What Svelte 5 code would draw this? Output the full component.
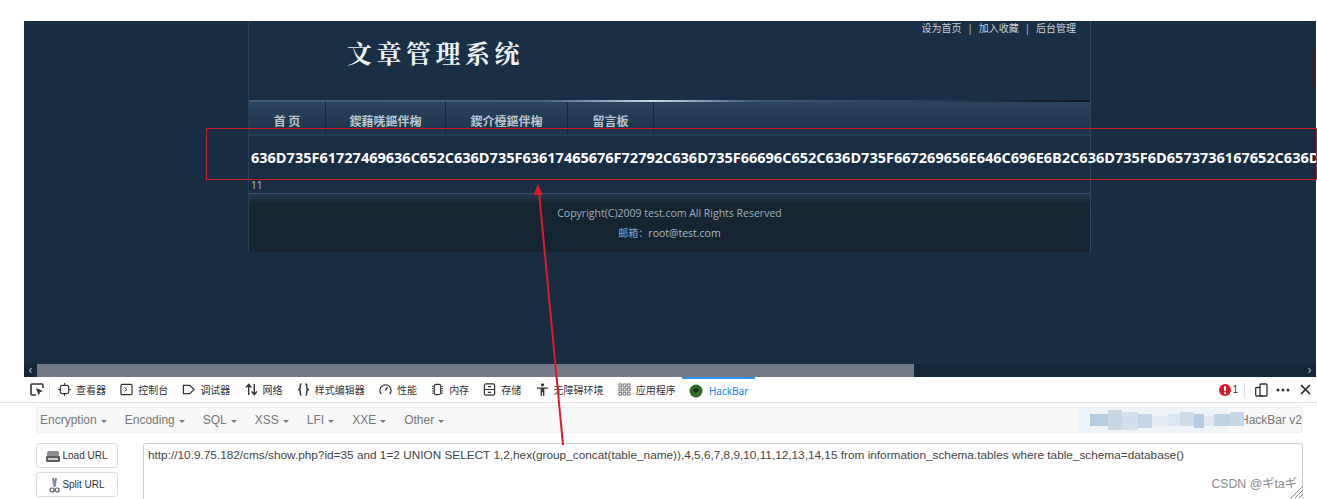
<script>
  const tools = [
    ['inspector', '查看器'], ['console', '控制台'], ['debugger', '调试器'], ['network', '网络'],
    ['style', '样式编辑器'], ['perf', '性能'], ['memory', '内存'], ['storage', '存储'],
    ['access', '无障碍环境'], ['apps', '应用程序']
  ];
  const menus = ['Encryption', 'Encoding', 'SQL', 'XSS', 'LFI', 'XXE', 'Other'];
  const nav = ['首 页', '鍥藉唴鏂伴椈', '鍥介檯鏂伴椈', '留言板'];
  const hex = '636D735F61727469636C652C636D735F63617465676F72792C636D735F66696C652C636D735F667269656E646C696E6B2C636D735F6D6573736167652C636D735F6E6F74696365';
  const url = 'http://10.9.75.182/cms/show.php?id=35 and 1=2 UNION SELECT 1,2,hex(group_concat(table_name)),4,5,6,7,8,9,10,11,12,13,14,15 from information_schema.tables where table_schema=database()';
  const mosaic = [
    [1078, 408, 150, 24, '#eef3f8'],
    [1090, 414, 18, 12, '#b9cde2'], [1108, 410, 14, 20, '#c6d7e8'], [1122, 412, 16, 18, '#d3e0ec'],
    [1138, 414, 14, 14, '#c4d5e7'], [1152, 416, 16, 10, '#e4ecf3'], [1168, 414, 12, 12, '#dbe6f0'],
    [1180, 412, 14, 14, '#cfddea'], [1194, 414, 10, 14, '#b5cbe1'], [1204, 416, 10, 10, '#dfe8f1'],
    [1214, 414, 16, 12, '#bfd2e5'], [1230, 412, 14, 14, '#c5d6e7']
  ];
</script>

<div class="screen">
  <div class="viewport">
    <div class="site">
      <header class="head">
        <div class="links"><span>设为首页</span><span>|</span><span>加入收藏</span><span>|</span><span>后台管理</span></div>
        <div class="title">文章管理系统</div>
      </header>
      <div class="rule"></div>
      <nav class="nav">
        {#each nav as n}<span class="nav-item">{n}</span>{/each}
      </nav>
      <main class="content">
        <div class="hex">{hex}</div>
        <div class="eleven">11</div>
      </main>
      <footer class="foot">
        <div>Copyright(C)2009 test.com All Rights Reserved</div>
        <div class="mail"><span class="cn">邮箱：</span>root@test.com</div>
      </footer>
    </div>
    <div class="smudge"></div>
  </div>

  <div class="scrollbar">
    <span class="sb-btn">‹</span><span class="sb-thumb"></span><span class="sb-track"></span><span class="sb-btn">›</span>
  </div>

  <section class="devtools">
    <div class="toolbar">
      <svg class="picker" width="14" height="14" viewBox="0 0 14 14" fill="none" stroke="#333" stroke-width="1.6"><path d="M6 12H2a1 1 0 0 1-1-1V2a1 1 0 0 1 1-1h10a1 1 0 0 1 1 1v3"/><path d="M6 5l7 3-3 1.300-1.300 3.500z" fill="#333" stroke="none"/></svg>
      <span class="divider"></span>
      <div class="tools">
        {#each tools as [id, label]}
          <div class="tool">
            <svg width="13" height="13" viewBox="0 0 14 14" fill="none" stroke="#333" stroke-width="1.300">
              {#if id === 'inspector'}
                <rect x="2.500" y="2.500" width="9" height="9" rx="2"/><path d="M7 0v2.500M7 11.500V14M0 7h2M12 7h2" stroke-width="1"/>
              {:else if id === 'console'}
                <rect x="1" y="1.500" width="12" height="11" rx="1.500"/><path d="M5 5l2.500 2L5 9" stroke-width="1"/>
              {:else if id === 'debugger'}
                <path d="M1.500 2.500h7L13 7l-4.500 4.500h-7z"/>
              {:else if id === 'network'}
                <path d="M4 13V2M1 5l3-3.500L7 5M10 1v11M7 9l3 3.500L13 9" stroke-width="1.500"/>
              {:else if id === 'style'}
                <path d="M5 1C3 1 3.500 3 3.500 5S1 7 1 7s2.500 0 2.500 2-.500 4 1.500 4M9 1c2 0 1.500 2 1.500 4S13 7 13 7s-2.500 0-2.500 2 .5 4-1.500 4" stroke-width="1.500"/>
              {:else if id === 'perf'}
                <path d="M2.500 12A6 6 0 1 1 11.500 12"/><path d="M7 8l2-3.500" stroke-width="1.500"/>
              {:else if id === 'memory'}
                <rect x="3.500" y="1.500" width="7" height="11" rx="2"/><path d="M1 3.500h2M1 6h2M1 8.500h2M1 11h2M11 3.500h2M11 6h2M11 8.500h2M11 11h2" stroke-width="1"/>
              {:else if id === 'storage'}
                <rect x="1.500" y="1" width="11" height="12" rx="1.500"/><path d="M1.500 7h11M5.500 4h3M5.500 10h3"/>
              {:else if id === 'access'}
                <circle cx="7" cy="2" r="1.700" fill="#333" stroke="none"/><path d="M1 4.800h12v1.400H9V14H7.600v-4H6.400v4H5V6.200H1z" fill="#333" stroke="none"/>
              {:else}
                <path d="M1 1h3v3H1zM5.500 1h3v3h-3zM10 1h3v3h-3zM1 5.500h3v3H1zM5.500 5.500h3v3h-3zM10 5.500h3v3h-3zM1 10h3v3H1zM5.500 10h3v3h-3zM10 10h3v3h-3z" stroke="#666" stroke-width="1"/>
              {/if}
            </svg>
            <span>{label}</span>
          </div>
        {/each}
        <div class="tab">
          <svg width="14" height="14" viewBox="0 0 14 14"><circle cx="7" cy="7" r="6.500" fill="#2f6b2a"/><path d="M4 6c1-2 4-2 6-1 0 2-1 2-2 3s-3 1-4-2z" fill="#16351a"/></svg>
          <span>HackBar</span>
        </div>
      </div>
      <div class="actions">
        <svg width="12" height="12" viewBox="0 0 11 11"><circle cx="5.500" cy="5.500" r="5.500" fill="#e0162b"/><rect x="4.600" y="2" width="1.800" height="4.600" fill="#fff"/><rect x="4.600" y="7.500" width="1.800" height="1.800" fill="#fff"/></svg>
        <span class="count">1</span>
        <span class="divider"></span>
        <svg class="device" width="13" height="14" viewBox="0 0 13 14" fill="none" stroke="#333" stroke-width="1.300"><rect x="5" y="1" width="7" height="12" rx="1"/><path d="M5 4.500H1.500a.8.800 0 0 0-.8.800V12a1 1 0 0 0 1 1H8"/></svg>
        <svg class="dots" width="14" height="4" viewBox="0 0 14 4" fill="#333"><circle cx="2" cy="2" r="1.500"/><circle cx="7" cy="2" r="1.500"/><circle cx="12" cy="2" r="1.500"/></svg>
        <svg class="close" width="11" height="11" viewBox="0 0 11 11" stroke="#222" stroke-width="1.600"><path d="M1 1l9 9M10 1l-9 9"/></svg>
      </div>
    </div>

    <div class="hackbar">
      <div class="menu">
        {#each menus as m}<span class="menu-item">{m}<i class="caret"></i></span>{/each}
        <span class="brand">HackBar v2</span>
      </div>
      <div class="work">
        <div class="buttons">
          <button class="btn">
            <svg width="14" height="12" viewBox="0 0 14 12"><rect x="1" y="1" width="12" height="7" rx="1.500" fill="#8d8d8d"/><rect x="0" y="6" width="14" height="6" rx="1" fill="#5e5e5e"/><rect x="2" y="8" width="10" height="2" fill="#c9c9c9"/></svg>
            Load URL
          </button>
          <button class="btn">
            <svg width="11" height="16" viewBox="0 0 11 16" fill="none" stroke="#4d5560" stroke-width="1.200"><path d="M4 1l1.500 9M7 1L5.500 10" stroke="#7d8aa0" stroke-width="2"/><circle cx="3" cy="13" r="2"/><circle cx="8" cy="13" r="2"/></svg>
            Split URL
          </button>
        </div>
        <div class="urlbox">{url}</div>
      </div>
    </div>
  </section>

  <svg class="marks" width="1317" height="499" viewBox="0 0 1317 499" fill="none">
    {#each mosaic as [x, y, w, h, c]}<rect {x} {y} width={w} height={h} fill={c}/>{/each}
    <rect x="206.500" y="128.500" width="1110" height="51" stroke="#d3182b" stroke-width="1"/>
    <path d="M563 445L539 192" stroke="#e3162b" stroke-width="2"/>
    <path d="M538 184l-4.500 11h9z" fill="#e3162b"/>
    <path d="M1291 498l12-12M1295 498l8-8M1299 498l4-4" stroke="#8a8a8a" stroke-width="1"/>
  </svg>
  <div class="watermark">CSDN @ギtaギ</div>
</div>

<style>
  :global(body) { margin: 0; background: #fff; }
  .screen {
    position: relative;
    width: 1317px;
    height: 499px;
    overflow: hidden;
    padding-top: 21px;
    box-sizing: border-box;
    background: #fff;
    font-family: "Open Sans", "Noto Sans CJK SC", sans-serif;
  }
  .viewport {
    position: relative;
    height: 343px;
    margin: 0 1px 0 24px;
    background: #182c42;
    overflow: hidden;
  }
  .site {
    width: 841px;
    height: 231px;
    margin-left: 224px;
    border-left: 1px solid #253d55;
    border-right: 1px solid #2f4961;
    background: #192f45;
    display: flex;
    flex-direction: column;
  }
  .head { height: 79px; display: flex; flex-direction: column; flex: none; }
  .links {
    align-self: flex-end;
    margin-right: 14px;
    display: flex;
    gap: 7.300px;
    font: 10px/14px "Noto Sans CJK SC", sans-serif;
    color: #c9d1d9;
  }
  .title {
    margin: 0 0 0 98px;
    font: 700 25px/34px "Noto Serif CJK SC", "Noto Sans CJK SC", sans-serif;
    letter-spacing: 4.500px;
    color: #eef2f5;
  }
  .rule {
    height: 2px;
    flex: none;
    background: linear-gradient(90deg, #3e5a75 0, #46627d 35%, #c8dbe8 48%, #3e5a75 60%, #2a4158 80%, #0b1520 100%);
  }
  .nav {
    height: 32px;
    flex: none;
    display: flex;
    background: linear-gradient(#2a4560, #1d3349);
  }
  .nav-item {
    display: flex;
    justify-content: center;
    align-items: flex-end;
    padding-bottom: 5px;
    box-sizing: border-box;
    border-right: 1px solid #14273a;
    font: 700 12px/16px "Noto Sans CJK SC", sans-serif;
    color: #b9c5d0;
    width: 120px;
  }
  .nav-item:first-child { width: 77px; }
  .nav-item:nth-child(3) { width: 122px; }
  .nav-item:nth-child(4) { width: 86px; }
  .content {
    flex: 1;
    padding-left: 2px;
    display: flex;
    flex-direction: column;
    border-bottom: 1px solid #3a5066;
    border-top: 2px solid #263f58;
    background: #192e44;
    white-space: nowrap;
  }
  .hex {
    margin-top: 12px;
    font: 700 14.500px/20px "Open Sans", sans-serif;
    color: #fff;
  }
  .eleven {
    margin-top: 10px;
    font-size: 10px;
    line-height: 14px;
    color: #b8c4d0;
  }
  .foot {
    height: 58px;
    flex: none;
    box-sizing: border-box;
    padding-top: 9px;
    background: linear-gradient(#23394f 0, #15252f 10px, #142433 100%);
    text-align: center;
    font-size: 10.500px;
    line-height: 20px;
    color: #9fb0c0;
  }
  .cn { color: #7fa5d3; font-family: "Noto Sans CJK SC", sans-serif; font-size: 10px; }
  .mail { color: #a9bccd; }
  .smudge {
    position: absolute;
    right: 0;
    top: 29px;
    width: 4px;
    height: 38px;
    background: #23272e;
  }
  .scrollbar {
    display: flex;
    height: 13px;
    margin: 0 1px 0 24px;
    background: #14273a;
  }
  .sb-btn {
    width: 13px;
    background: #14273a;
    color: #8a97a6;
    font: 700 12px/12px "Liberation Sans", sans-serif;
    text-align: center;
  }
  .sb-thumb { width: 877px; background: #727986; }
  .sb-track { flex: 1; }
  .devtools { background: #fff; font-family: "Liberation Sans", "Noto Sans CJK SC", sans-serif; }
  .toolbar {
    height: 25px;
    padding-left: 30px;
    display: flex;
    align-items: center;
    border-bottom: 1px solid #e1e1e2;
  }
  .picker { flex: none; }
  .divider { width: 1px; height: 16px; background: #e1e1e2; margin: 0 8px 0 5px; flex: none; }
  .tools { display: flex; align-items: center; height: 100%; }
  .tool {
    display: flex;
    align-items: center;
    gap: 5px;
    margin-right: 14.200px;
    font: 10px/14px "Noto Sans CJK SC", sans-serif;
    color: #333;
  }
  .tab {
    display: flex;
    align-items: center;
    gap: 6px;
    height: 100%;
    padding: 0 7px;
    margin-left: -8px;
    box-sizing: border-box;
    border-top: 2px solid #2f8fee;
    font: 10px/14px "Noto Sans", sans-serif;
    color: #0a84ff;
  }
  .actions {
    margin-left: auto;
    margin-right: 6px;
    display: flex;
    align-items: center;
  }
  .count { font-size: 10px; color: #333; margin-left: 1px; }
  .actions .divider { margin: 0 10px 0 6px; }
  .dots { margin-left: 8px; }
  .close { margin-left: 10px; }
  .hackbar { padding: 4px 14px 0 36px; }
  .menu {
    height: 26px;
    box-sizing: border-box;
    display: flex;
    align-items: center;
    padding-left: 3px;
    border: 1px solid #eee;
    border-radius: 3px;
    background: #f8f8f8;
    font-size: 12px;
    color: #777;
  }
  .menu-item { display: flex; align-items: center; margin-right: 18px; white-space: nowrap; }
  .caret {
    margin-left: 4px;
    border-top: 3px solid #777;
    border-left: 3px solid transparent;
    border-right: 3px solid transparent;
    margin-top: 2px;
  }
  .brand { margin-left: auto; }
  .work { display: flex; gap: 25px; margin-top: 10px; }
  .buttons { display: flex; flex-direction: column; gap: 4px; width: 82px; flex: none; }
  .btn {
    height: 25px;
    padding: 0;
    display: flex;
    align-items: center;
    justify-content: center;
    gap: 2px;
    border: 1px solid #ddd;
    border-radius: 3px;
    background: #fff;
    font: 10px/14px "Liberation Sans", sans-serif;
    color: #333;
  }
  .urlbox {
    flex: 1;
    height: 80px;
    box-sizing: border-box;
    padding: 4px 4px;
    border: 1px solid #ccc;
    border-radius: 3px;
    font-size: 11.800px;
    line-height: 15px;
    color: #444;
    white-space: nowrap;
  }
  .marks { position: absolute; left: 0; top: 0; pointer-events: none; }
  .watermark {
    position: absolute;
    right: 20px;
    top: 477px;
    font: 12.300px/14px "Liberation Sans", "Noto Sans CJK JP", sans-serif;
    color: #8d8d8d;
  }
</style>
